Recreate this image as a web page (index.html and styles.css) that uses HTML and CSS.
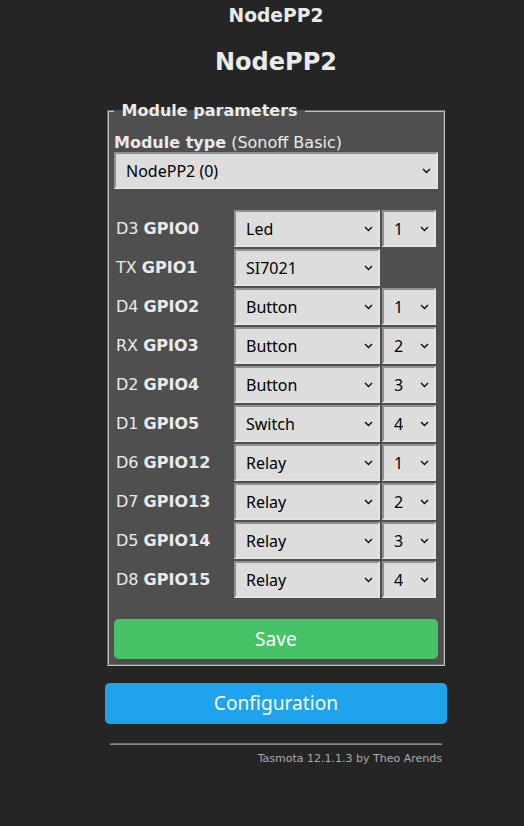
FILE: index.html
```html
<!DOCTYPE html>
<html lang="en">
<head>
<meta charset="utf-8">
<title>NodePP2 - Module</title>
<link rel="stylesheet" href="styles.css">
</head>
<body>
<div class="page">
  <header class="head">
    <h3 class="module-name">NodePP2</h3>
    <h2 class="device-name">NodePP2</h2>
  </header>
  <fieldset class="panel">
    <legend class="panel-title"><b>&nbsp;Module parameters&nbsp;</b></legend>
    <p class="type-label"><b>Module type</b> (Sonoff Basic)</p>
    <select class="sel sel-full"><option selected>NodePP2 (0)</option><option>Sonoff Basic (1)</option></select>
    <div class="gpio-grid">
      <div class="lbl"><span>D3 <b>GPIO0</b></span></div>
      <select class="sel"><option>Led</option></select>
      <select class="sel"><option>1</option></select>

      <div class="lbl"><span>TX <b>GPIO1</b></span></div>
      <select class="sel"><option>SI7021</option></select>
      <div class="empty"></div>

      <div class="lbl"><span>D4 <b>GPIO2</b></span></div>
      <select class="sel"><option>Button</option></select>
      <select class="sel"><option>1</option></select>

      <div class="lbl"><span>RX <b>GPIO3</b></span></div>
      <select class="sel"><option>Button</option></select>
      <select class="sel"><option>2</option></select>

      <div class="lbl"><span>D2 <b>GPIO4</b></span></div>
      <select class="sel"><option>Button</option></select>
      <select class="sel"><option>3</option></select>

      <div class="lbl"><span>D1 <b>GPIO5</b></span></div>
      <select class="sel"><option>Switch</option></select>
      <select class="sel"><option>4</option></select>

      <div class="lbl"><span>D6 <b>GPIO12</b></span></div>
      <select class="sel"><option>Relay</option></select>
      <select class="sel"><option>1</option></select>

      <div class="lbl"><span>D7 <b>GPIO13</b></span></div>
      <select class="sel"><option>Relay</option></select>
      <select class="sel"><option>2</option></select>

      <div class="lbl"><span>D5 <b>GPIO14</b></span></div>
      <select class="sel"><option>Relay</option></select>
      <select class="sel"><option>3</option></select>

      <div class="lbl"><span>D8 <b>GPIO15</b></span></div>
      <select class="sel"><option>Relay</option></select>
      <select class="sel"><option>4</option></select>
    </div>
    <button class="btn btn-green">Save</button>
  </fieldset>
  <button class="btn btn-blue btn-config">Configuration</button>
  <footer class="foot">
    <hr class="foot-rule">
    <a class="foot-link" href="#">Tasmota 12.1.1.3 by Theo Arends</a>
  </footer>
</div>
</body>
</html>
```
FILE: styles.css
```css
html, body {
  margin: 0;
  padding: 0;
  background: #252525;
}
body {
  font-family: "DejaVu Sans", Verdana, sans-serif;
  font-size: 16px;
  color: #eaeaea;
}
.page {
  width: 342px;
  margin-left: 105px;
  text-align: left;
}
.head {
  text-align: center;
  padding-top: 5px;
}
.module-name {
  font-size: 18.72px;
  margin: 0;
  line-height: normal;
}
.device-name {
  font-size: 24px;
  margin: 22px 0 0;
  line-height: normal;
}
.panel {
  margin: 25px 2px 0;
  padding: 5px;
  background: #4f4f4f;
  border: 2px groove rgb(192, 192, 192);
  min-width: 0;
}
.panel-title {
  padding: 0 2px;
}
.type-label {
  margin: 8px 0 0;
  line-height: normal;
}
.sel {
  display: block;
  box-sizing: border-box;
  width: 100%;
  height: 37px;
  padding: 5px 20px 5px 10px;
  margin: 0;
  border: 2px inset #e4e4e4;
  font-family: "Noto Sans", sans-serif;
  font-size: 16px;
  color: #000000;
  -webkit-appearance: none;
  appearance: none;
  background-color: #dddddd;
  background-image: url("data:image/svg+xml;utf8,<svg xmlns='http://www.w3.org/2000/svg' width='9' height='6' viewBox='0 0 9 6'><path d='M1 1 L4.5 4.5 L8 1' fill='none' stroke='%23111' stroke-width='1.5'/></svg>");
  background-repeat: no-repeat;
  background-position: right 5px center;
  background-size: 9px 6px;
}
.gpio-grid {
  display: grid;
  grid-template-columns: 116px 146px 54px;
  grid-auto-rows: 37px;
  column-gap: 2px;
  row-gap: 2px;
  padding: 0 2px;
  margin-top: 21px;
}
.lbl {
  display: flex;
  align-items: center;
  white-space: nowrap;
}
.btn {
  display: block;
  width: 100%;
  border: 0;
  border-radius: 0.3rem;
  color: #faffff;
  font-family: "Noto Sans", sans-serif;
  font-size: 19.2px;
  line-height: 38.4px;
  padding: 1px 6px;
  cursor: pointer;
}
.btn-green {
  background: #47c266;
  margin-top: 21px;
}
.btn-blue {
  background: #1fa3ec;
}
.btn-config {
  margin-top: 17px;
}
.foot {
  text-align: right;
  font-size: 11px;
  padding: 0 5px;
  margin-top: 19px;
}
.foot-rule {
  margin: 5px 0 7px;
  border: 0;
  border-top: 1px solid #6a6a6a;
  border-bottom: 1px solid #8a8a8a;
  height: 0;
}
.foot-link {
  color: #aaaaaa;
  text-decoration: none;
}
```
